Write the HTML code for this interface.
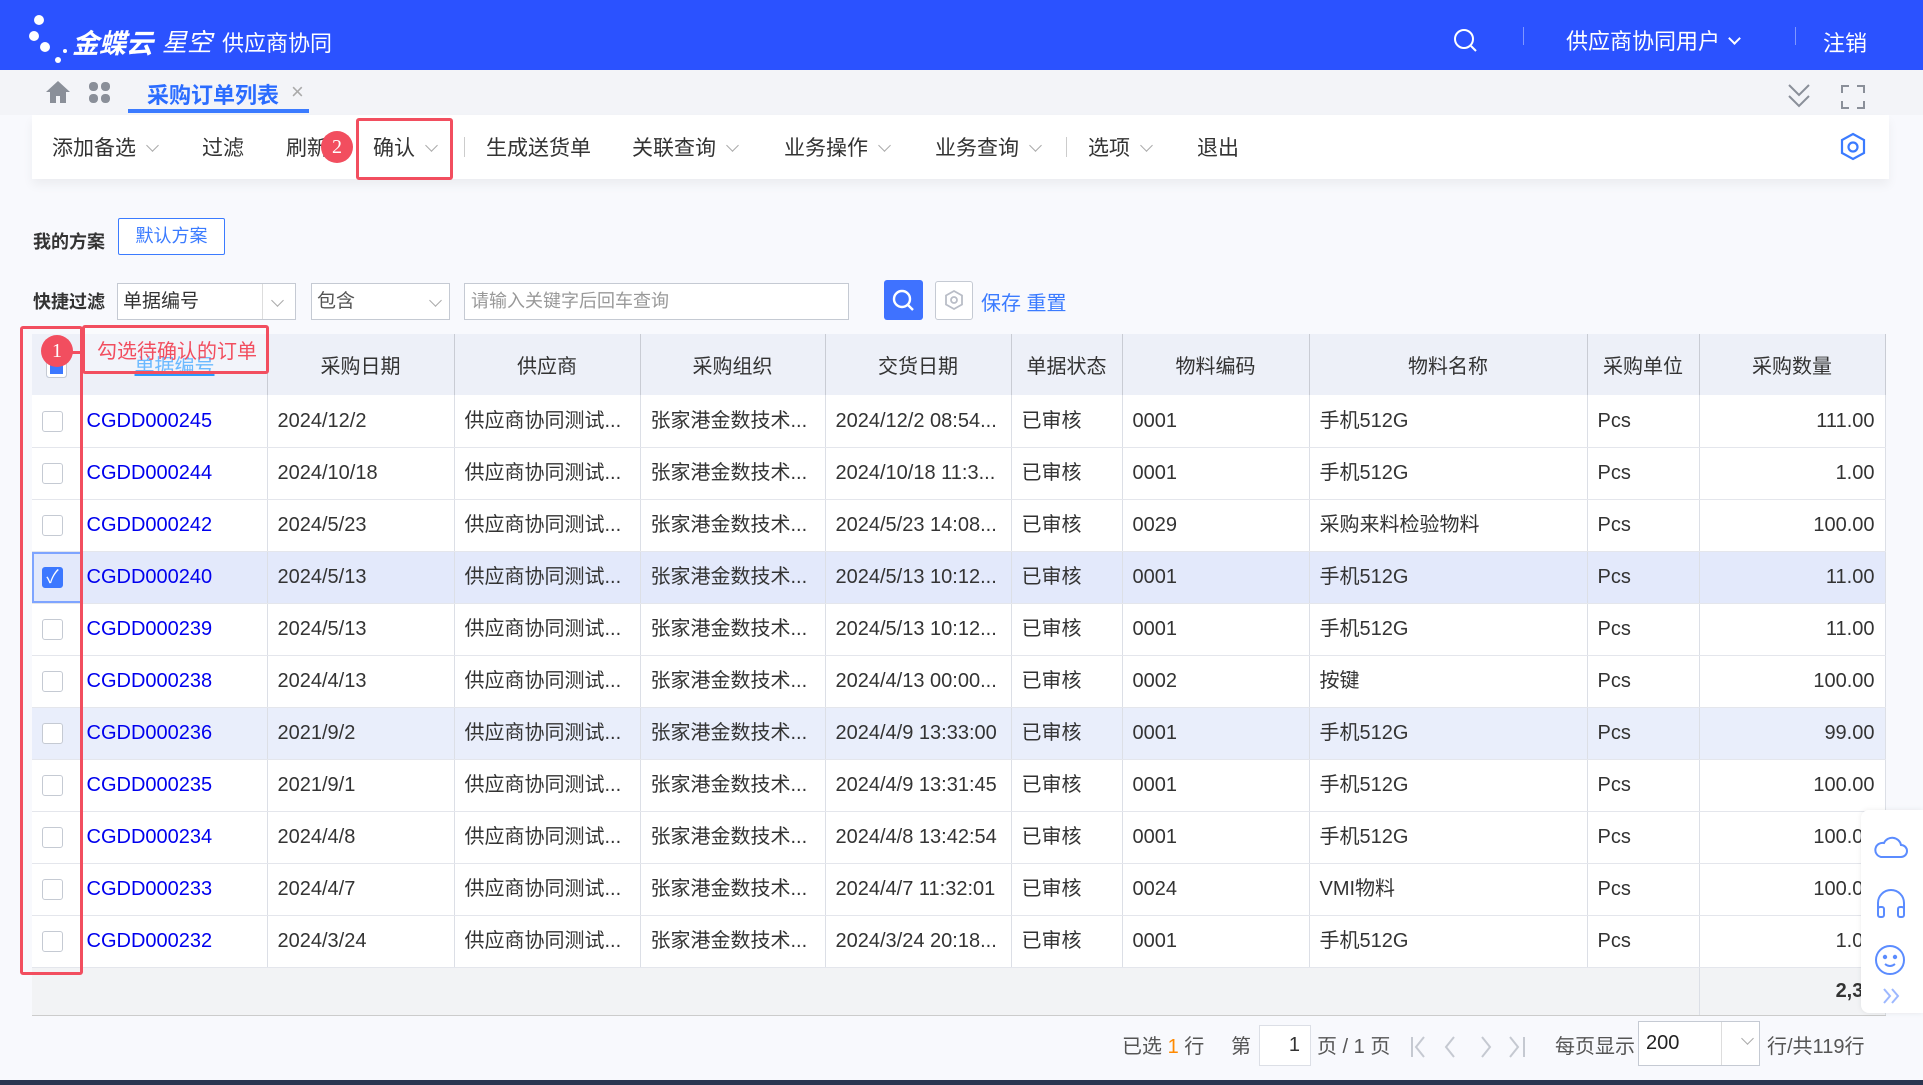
<!DOCTYPE html>
<html><head><meta charset="utf-8">
<style>
*{margin:0;padding:0;box-sizing:border-box}
body{width:1923px;height:1085px;overflow:hidden;background:#f8f9fd;font-family:"Liberation Sans","Noto Sans CJK SC",sans-serif;color:#333;position:relative}
.a{position:absolute}
.hdr{left:0;top:0;width:1923px;height:70px;background:#2b52ff}
.tabs{left:0;top:70px;width:1923px;height:45px;background:#f3f4f8}
.tb{left:32px;top:115px;width:1857px;height:64px;background:#fff;box-shadow:0 6px 10px rgba(0,0,0,0.05)}
.ti{position:absolute;top:20px;font-size:21px;line-height:28px;color:#333;white-space:nowrap}
.car{display:inline-block;width:9px;height:9px;border-right:1.5px solid #aaa;border-bottom:1.5px solid #aaa;transform:rotate(45deg);margin-left:12px;position:relative;top:-5px}
.sep{position:absolute;top:22px;width:1px;height:20px;background:#ccc}
table{border-collapse:collapse;table-layout:fixed;position:absolute;left:32px;top:334px;width:1853px}
td,th{height:52px;line-height:24px;border-right:1px solid #dcdfe6;border-bottom:1px solid #e4e6ec;font-size:20px;font-weight:normal;white-space:nowrap;overflow:hidden;padding:0 10px;text-align:left;vertical-align:middle}
th{height:61px;background:#edf0f8;color:#333;text-align:center;border-bottom:none;padding-top:4px}
th{border-right:1px solid #c9ccd4}
td{background:#fff}
tr.sel td{background:#e3e9fb}
tr.hov td{background:#e9eefb}
td.id{color:#0000ee;padding-left:4px}
td.r{text-align:right}
.cb{display:inline-block;width:21px;height:21px;border:1px solid #c5cad3;border-radius:3px;background:#fff;vertical-align:middle}
.cb.on{background:#3c78ff;border-color:#3c78ff;color:#fff;font-size:18px;line-height:19px;text-align:center}
.red{border:3px solid #f24e5f;border-radius:3px}
.badge{width:32px;height:32px;border-radius:50%;background:#f24e5f;color:#fff;font-family:"Liberation Serif",serif;font-size:20px;text-align:center;line-height:32px}
.pg{top:1034px;font-size:20px;line-height:26px;color:#555}
</style></head><body>
<div class="a hdr">
  <svg class="a" style="left:28px;top:14px" width="40" height="56"><circle cx="11" cy="6" r="5" fill="#fff"/><circle cx="6" cy="22" r="5" fill="#fff"/><circle cx="17" cy="33" r="5" fill="#fff"/><circle cx="30" cy="46" r="3" fill="#fff"/><circle cx="37" cy="37" r="2" fill="#fff"/></svg>
  <div class="a" style="left:72px;top:22px;color:#fff;font-size:27px;font-weight:bold;font-style:italic">金蝶云</div>
  <div class="a" style="left:162px;top:23px;color:#fff;font-size:25px;font-style:italic">星空</div>
  <div class="a" style="left:222px;top:26px;color:#fff;font-size:22px">供应商协同</div>
  <svg class="a" style="left:1452px;top:27px" width="28" height="28" fill="none" stroke="#fff" stroke-width="2"><circle cx="12" cy="12" r="9"/><path d="M19 19l5 5"/></svg>
  <div class="a" style="left:1523px;top:27px;width:1px;height:18px;background:rgba(255,255,255,.4)"></div>
  <div class="a" style="left:1566px;top:24px;color:#fff;font-size:22px">供应商协同用户<span style="display:inline-block;width:9px;height:9px;border-right:2px solid #fff;border-bottom:2px solid #fff;transform:rotate(45deg);margin-left:10px;position:relative;top:-6px"></span></div>
  <div class="a" style="left:1795px;top:27px;width:1px;height:18px;background:rgba(255,255,255,.4)"></div>
  <div class="a" style="left:1823px;top:26px;color:#fff;font-size:22px">注销</div>
</div>
<div class="a tabs">
  <svg class="a" style="left:45px;top:10px" width="26" height="24" fill="#8a8f99"><path d="M13 1L1 12h4v11h6v-7h4v7h6V12h4z"/></svg>
  <svg class="a" style="left:88px;top:11px" width="24" height="24" fill="#8a8f99"><rect x="1" y="1" width="9" height="9" rx="4"/><rect x="13" y="1" width="9" height="9" rx="4"/><rect x="1" y="13" width="9" height="9" rx="4"/><rect x="13" y="13" width="9" height="9" rx="4"/></svg>
  <div class="a" style="left:147px;top:8px;color:#2b6cff;font-size:22px;font-weight:bold">采购订单列表</div>
  <div class="a" style="left:291px;top:11px;color:#aaa;font-size:22px;line-height:22px">×</div>
  <div class="a" style="left:128px;top:39px;width:181px;height:4px;background:#3b7bff"></div>
  <svg class="a" style="left:1786px;top:12px" width="26" height="28" fill="none" stroke="#8a8f99" stroke-width="2"><path d="M3 3l10 10 10-10M3 14l10 10 10-10"/></svg>
  <svg class="a" style="left:1840px;top:14px" width="26" height="26" fill="none" stroke="#8a8f99" stroke-width="2"><path d="M2 9V2h7M17 2h7v7M24 17v7h-7M9 24H2v-7"/></svg>
</div>
<div class="a tb">
  <div class="ti" style="left:20px">添加备选<span class="car"></span></div>
  <div class="ti" style="left:170px">过滤</div>
  <div class="ti" style="left:254px">刷新</div>
  <div class="ti" style="left:341px">确认<span class="car"></span></div>
  <div class="sep" style="left:432px"></div>
  <div class="ti" style="left:454px">生成送货单</div>
  <div class="ti" style="left:600px">关联查询<span class="car"></span></div>
  <div class="ti" style="left:752px">业务操作<span class="car"></span></div>
  <div class="ti" style="left:903px">业务查询<span class="car"></span></div>
  <div class="sep" style="left:1034px"></div>
  <div class="ti" style="left:1056px">选项<span class="car"></span></div>
  <div class="ti" style="left:1165px">退出</div>
  <svg class="a" style="left:1806px;top:17px" width="30" height="30" fill="none" stroke="#3b7bff" stroke-width="2.2"><path d="M15 2l11 6v13l-11 6-11-6V8z"/><circle cx="15" cy="15" r="4.5"/></svg>
</div>
<div class="a red" style="left:356px;top:118px;width:97px;height:62px"></div>
<div class="a badge" style="left:321px;top:131px">2</div>

<div class="a" style="left:33px;top:228px;font-size:18px;font-weight:bold;color:#333">我的方案</div>
<div class="a" style="left:118px;top:218px;width:107px;height:37px;border:1px solid #3b7bff;background:#fff;color:#3b7bff;font-size:18px;text-align:center;line-height:34px;border-radius:2px">默认方案</div>
<div class="a" style="left:33px;top:288px;font-size:18px;font-weight:bold;color:#333">快捷过滤</div>
<div class="a" style="left:117px;top:283px;width:179px;height:37px;border:1px solid #c5cad3;background:#fff;font-size:19px;line-height:35px;padding-left:5px">单据编号<div class="a" style="left:144px;top:0;width:1px;height:35px;background:#ddd"></div><span class="car" style="position:absolute;left:143px;top:12px"></span></div>
<div class="a" style="left:311px;top:283px;width:139px;height:37px;border:1px solid #c5cad3;background:#fff;font-size:19px;line-height:35px;padding-left:5px;color:#555">包含<span class="car" style="position:absolute;left:107px;top:12px"></span></div>
<div class="a" style="left:464px;top:283px;width:385px;height:37px;border:1px solid #c5cad3;background:#fff;font-size:18px;line-height:35px;padding-left:6px;color:#999">请输入关键字后回车查询</div>
<div class="a" style="left:884px;top:280px;width:39px;height:40px;background:#3f72ff;border-radius:3px"><svg width="39" height="40" fill="none" stroke="#fff" stroke-width="2.4"><circle cx="18" cy="19" r="8"/><path d="M24 25l5 5"/></svg></div>
<div class="a" style="left:935px;top:281px;width:38px;height:39px;border:1px solid #c5cad3;border-radius:3px;background:#fff"><svg width="36" height="37" fill="none" stroke="#b9bdc7" stroke-width="1.8"><path d="M18 9l8 4.5v9L18 27l-8-4.5v-9z"/><circle cx="18" cy="18" r="3"/></svg></div>
<div class="a" style="left:981px;top:287px;font-size:20px;color:#3b7bff">保存 重置</div>

<table>
<colgroup><col style="width:50px"><col style="width:185px"><col style="width:187px"><col style="width:186px"><col style="width:185px"><col style="width:186px"><col style="width:111px"><col style="width:187px"><col style="width:278px"><col style="width:112px"><col style="width:186px"></colgroup>
<tr><th><span class="cb" style="background:#3c78ff;border:1px solid #c5cad3;box-shadow:inset 0 0 0 3px #fff"></span></th><th style="color:#2b9bff;text-decoration:underline">单据编号</th><th>采购日期</th><th>供应商</th><th>采购组织</th><th>交货日期</th><th>单据状态</th><th>物料编码</th><th>物料名称</th><th>采购单位</th><th>采购数量</th></tr>
<tr><td><span class="cb"></span></td><td class="id">CGDD000245</td><td>2024/12/2</td><td>供应商协同测试...</td><td>张家港金数技术...</td><td>2024/12/2 08:54...</td><td>已审核</td><td>0001</td><td>手机512G</td><td>Pcs</td><td class="r">111.00</td></tr>
<tr><td><span class="cb"></span></td><td class="id">CGDD000244</td><td>2024/10/18</td><td>供应商协同测试...</td><td>张家港金数技术...</td><td>2024/10/18 11:3...</td><td>已审核</td><td>0001</td><td>手机512G</td><td>Pcs</td><td class="r">1.00</td></tr>
<tr><td><span class="cb"></span></td><td class="id">CGDD000242</td><td>2024/5/23</td><td>供应商协同测试...</td><td>张家港金数技术...</td><td>2024/5/23 14:08...</td><td>已审核</td><td>0029</td><td>采购来料检验物料</td><td>Pcs</td><td class="r">100.00</td></tr>
<tr class="sel"><td style="box-shadow:inset 0 0 0 2px #7ea4ff"><span class="cb on">✓</span></td><td class="id">CGDD000240</td><td>2024/5/13</td><td>供应商协同测试...</td><td>张家港金数技术...</td><td>2024/5/13 10:12...</td><td>已审核</td><td>0001</td><td>手机512G</td><td>Pcs</td><td class="r">11.00</td></tr>
<tr><td><span class="cb"></span></td><td class="id">CGDD000239</td><td>2024/5/13</td><td>供应商协同测试...</td><td>张家港金数技术...</td><td>2024/5/13 10:12...</td><td>已审核</td><td>0001</td><td>手机512G</td><td>Pcs</td><td class="r">11.00</td></tr>
<tr><td><span class="cb"></span></td><td class="id">CGDD000238</td><td>2024/4/13</td><td>供应商协同测试...</td><td>张家港金数技术...</td><td>2024/4/13 00:00...</td><td>已审核</td><td>0002</td><td>按键</td><td>Pcs</td><td class="r">100.00</td></tr>
<tr class="hov"><td><span class="cb"></span></td><td class="id">CGDD000236</td><td>2021/9/2</td><td>供应商协同测试...</td><td>张家港金数技术...</td><td>2024/4/9 13:33:00</td><td>已审核</td><td>0001</td><td>手机512G</td><td>Pcs</td><td class="r">99.00</td></tr>
<tr><td><span class="cb"></span></td><td class="id">CGDD000235</td><td>2021/9/1</td><td>供应商协同测试...</td><td>张家港金数技术...</td><td>2024/4/9 13:31:45</td><td>已审核</td><td>0001</td><td>手机512G</td><td>Pcs</td><td class="r">100.00</td></tr>
<tr><td><span class="cb"></span></td><td class="id">CGDD000234</td><td>2024/4/8</td><td>供应商协同测试...</td><td>张家港金数技术...</td><td>2024/4/8 13:42:54</td><td>已审核</td><td>0001</td><td>手机512G</td><td>Pcs</td><td class="r">100.00</td></tr>
<tr><td><span class="cb"></span></td><td class="id">CGDD000233</td><td>2024/4/7</td><td>供应商协同测试...</td><td>张家港金数技术...</td><td>2024/4/7 11:32:01</td><td>已审核</td><td>0024</td><td>VMI物料</td><td>Pcs</td><td class="r">100.00</td></tr>
<tr><td><span class="cb"></span></td><td class="id">CGDD000232</td><td>2024/3/24</td><td>供应商协同测试...</td><td>张家港金数技术...</td><td>2024/3/24 20:18...</td><td>已审核</td><td>0001</td><td>手机512G</td><td>Pcs</td><td class="r">1.00</td></tr>
<tr><td colspan="10" style="background:#f2f3f5;height:48px;border-bottom:1px solid #ccc"></td><td class="r" style="background:#f2f3f5;height:48px;font-weight:bold;border-bottom:1px solid #ccc">2,38</td></tr>
</table>

<div class="a red" style="left:20px;top:326px;width:63px;height:649px"></div>
<div class="a red" style="left:82px;top:325px;width:187px;height:49px;background:rgba(255,255,255,0.3)"></div>
<div class="a" style="left:97px;top:335px;font-size:20px;color:#f24e5f">勾选待确认的订单</div>
<div class="a" style="left:70px;top:351px;width:14px;height:3px;background:#f24e5f"></div>
<div class="a badge" style="left:41px;top:335px">1</div>

<div class="a" style="left:1861px;top:810px;width:62px;height:203px;background:#fff;border-radius:8px 0 0 8px;box-shadow:0 0 6px rgba(0,0,0,0.08)">
  <svg class="a" style="left:12px;top:22px" width="36" height="28" fill="none" stroke="#5b8cff" stroke-width="2"><path d="M8 25h20a6 6 0 0 0 0-12 9 9 0 0 0-17-2 7 7 0 0 0-3 14z"/></svg>
  <svg class="a" style="left:14px;top:78px" width="32" height="32" fill="none" stroke="#5b8cff" stroke-width="2"><path d="M3 22v-7a13 13 0 0 1 26 0v7"/><rect x="3" y="19" width="6" height="10" rx="2"/><rect x="23" y="19" width="6" height="10" rx="2"/></svg>
  <svg class="a" style="left:12px;top:133px" width="34" height="34" fill="none" stroke="#5b8cff" stroke-width="2"><circle cx="17" cy="17" r="14"/><circle cx="12" cy="14" r="1.2" fill="#5b8cff"/><circle cx="22" cy="14" r="1.2" fill="#5b8cff"/><path d="M12 21q5 4 10 0"/></svg>
  <svg class="a" style="left:20px;top:176px" width="22" height="20" fill="none" stroke="#9db8ff" stroke-width="2"><path d="M3 3l6 7-6 7M11 3l6 7-6 7"/></svg>
</div>

<div class="a pg" style="left:1122px">已选 <span style="color:#ff8a00">1</span> 行</div>
<div class="a pg" style="left:1231px">第</div>
<div class="a" style="left:1259px;top:1025px;width:52px;height:41px;border:1px solid #dcdfe6;background:#fff;font-size:20px;text-align:right;padding-right:10px;line-height:38px">1</div>
<div class="a pg" style="left:1317px">页 / 1 页</div>
<svg class="a" style="left:1408px;top:1033px" width="130" height="28" fill="none" stroke="#c5c9d1" stroke-width="2"><path d="M4 4v20M16 4l-8 10 8 10M46 4l-8 10 8 10M74 4l8 10-8 10M102 4l8 10-8 10M116 4v20"/></svg>
<div class="a pg" style="left:1555px">每页显示</div>
<div class="a" style="left:1638px;top:1021px;width:122px;height:45px;border:1px solid #c5cad3;background:#fff;font-size:20px;line-height:43px;padding-left:7px;color:#222">200<div class="a" style="left:82px;top:0;width:1px;height:43px;background:#ddd"></div><span class="car" style="position:absolute;left:92px;top:12px"></span></div>
<div class="a pg" style="left:1767px">行/共119行</div>
<div class="a" style="left:0;top:1080px;width:1923px;height:5px;background:#2a3550"></div>
</body></html>
